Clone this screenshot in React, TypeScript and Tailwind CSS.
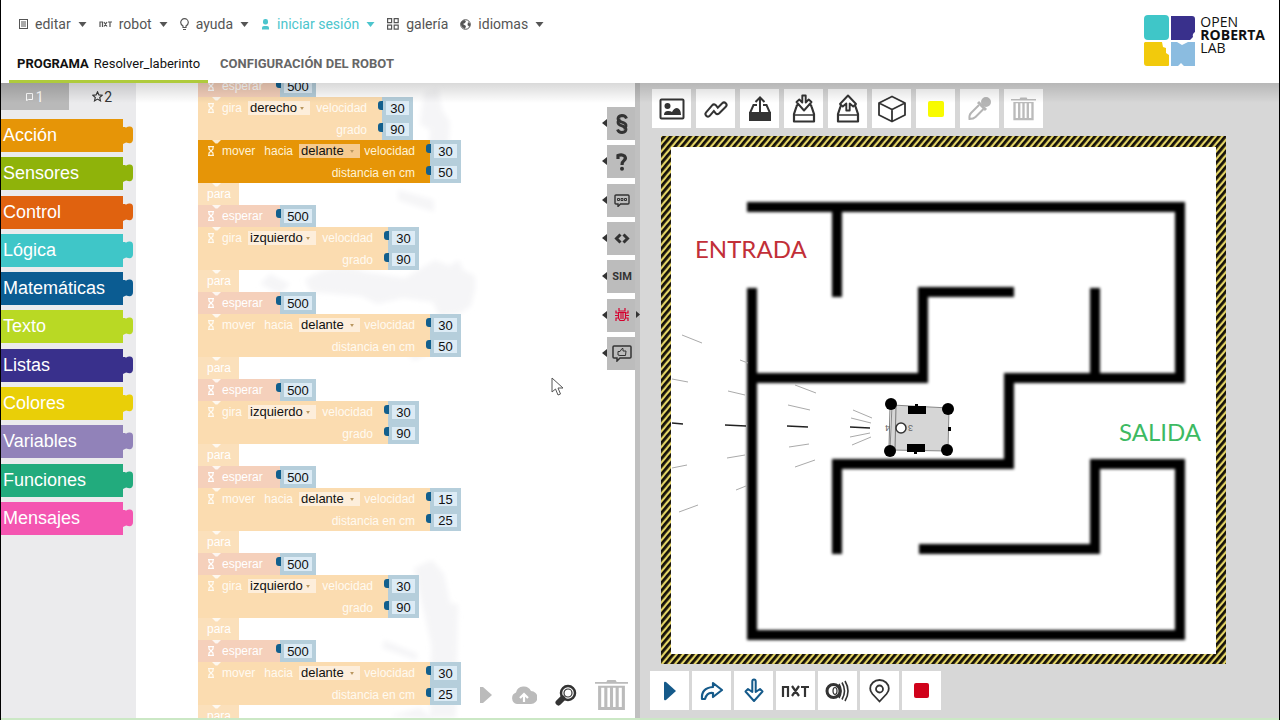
import React, { useId } from "react";

const CATEGORIES = [
  { name: "Acción", bg: "bg-[#e69507]", text: "text-[#e69507]" },
  { name: "Sensores", bg: "bg-[#8fb30a]", text: "text-[#8fb30a]" },
  { name: "Control", bg: "bg-[#e0620f]", text: "text-[#e0620f]" },
  { name: "Lógica", bg: "bg-[#3fc6c8]", text: "text-[#3fc6c8]" },
  { name: "Matemáticas", bg: "bg-[#0b5c92]", text: "text-[#0b5c92]" },
  { name: "Texto", bg: "bg-[#b9d924]", text: "text-[#b9d924]" },
  { name: "Listas", bg: "bg-[#39308c]", text: "text-[#39308c]" },
  { name: "Colores", bg: "bg-[#e9cf08]", text: "text-[#e9cf08]" },
  { name: "Variables", bg: "bg-[#9182b9]", text: "text-[#9182b9]" },
  { name: "Funciones", bg: "bg-[#22ab7d]", text: "text-[#22ab7d]" },
  { name: "Mensajes", bg: "bg-[#f455b1]", text: "text-[#f455b1]" },
];

type Step =
  | { kind: "wait"; ms: number }
  | { kind: "stop" }
  | { kind: "turn"; dir: "derecho" | "izquierdo"; speed: number; degrees: number }
  | { kind: "move"; speed: number; distance: number; active?: boolean };

const PROGRAM: Step[] = [
  { kind: "wait", ms: 500 },
  { kind: "turn", dir: "derecho", speed: 30, degrees: 90 },
  { kind: "move", speed: 30, distance: 50, active: true },
  { kind: "stop" },
  { kind: "wait", ms: 500 },
  { kind: "turn", dir: "izquierdo", speed: 30, degrees: 90 },
  { kind: "stop" },
  { kind: "wait", ms: 500 },
  { kind: "move", speed: 30, distance: 50 },
  { kind: "stop" },
  { kind: "wait", ms: 500 },
  { kind: "turn", dir: "izquierdo", speed: 30, degrees: 90 },
  { kind: "stop" },
  { kind: "wait", ms: 500 },
  { kind: "move", speed: 15, distance: 25 },
  { kind: "stop" },
  { kind: "wait", ms: 500 },
  { kind: "turn", dir: "izquierdo", speed: 30, degrees: 90 },
  { kind: "stop" },
  { kind: "wait", ms: 500 },
  { kind: "move", speed: 30, distance: 25 },
  { kind: "stop" },
];

/* ---------- header ---------- */

const Caret = () => (
  <svg width="9" height="5" viewBox="0 0 9 5" fill="currentColor">
    <path d="M0.5 0h8L4.500 5z" />
  </svg>
);

interface MenuItemProps {
  label: string;
  icon: React.ReactNode;
  caret?: boolean;
  accent?: boolean;
}

const MenuItem: React.FC<MenuItemProps> = ({ label, icon, caret = true, accent }) => (
  <button className={`flex items-center gap-[7px] text-sm leading-5 ${accent ? "text-[#4cc5cd]" : "text-[#555]"}`}>
    {icon}
    <span>{label}</span>
    {caret && <Caret />}
  </button>
);

const Logo = () => (
  <div className="flex gap-1">
    <svg width="52" height="52" viewBox="0 0 52 52">
      <rect x="0" y="0" width="25" height="25" rx="4" fill="#3fc6c8" />
      <path d="M27 1h21a3 3 0 0 1 3 3v13q-3 2-2 5l-3 3H27z" fill="#39308c" />
      <path d="M1 27h17l1 5 3 1v5l3 2v10q0 1-1 1H3q-3 0-3-3V28z" fill="#f2ca0c" />
      <path d="M27 27h6l5 3 6-3h7v24H40l-3-3-3 3h-7z" fill="#8bbce0" />
    </svg>
    <div className="font-['Open_Sans',sans-serif] text-sm leading-[13px] text-[#111]">
      <div>OPEN</div>
      <div className="font-bold">ROBERTA</div>
      <div>LAB</div>
    </div>
  </div>
);

const Header = () => (
  <header className="flex h-[83px] shrink-0 justify-between bg-white">
    <div className="flex flex-col justify-between pt-[14px]">
      <nav className="flex gap-3 pl-[18px]">
        <MenuItem
          label="editar"
          icon={
            <svg width="9" height="11" viewBox="0 0 9 11" fill="none" stroke="currentColor">
              <rect x="0.500" y="0.500" width="8" height="9" />
              <path d="M2 3h5M2 5h5M2 7h5" />
            </svg>
          }
        />
        <MenuItem
          label="robot"
          icon={
            <svg width="13" height="6" viewBox="0 0 13 6" fill="none" stroke="currentColor" strokeWidth="1.2">
              <path d="M1 6V1h2.500v5M5 1l3 4.500M8 1L5 5.500M9 1h4M11 1v5" />
            </svg>
          }
        />
        <MenuItem
          label="ayuda"
          icon={
            <svg width="9" height="13" viewBox="0 0 9 13" fill="none" stroke="currentColor" strokeWidth="1.2">
              <path d="M3 9.500V8C1.500 7 .7 6 .7 4.500a3.800 3.800 0 0 1 7.600 0C8.300 6 7.500 7 6 8v1.500zM3 11.500h3" />
            </svg>
          }
        />
        <MenuItem
          accent
          label="iniciar sesión"
          icon={
            <svg width="9" height="11" viewBox="0 0 9 11" fill="currentColor">
              <rect x="2" y="0" width="5" height="5.500" rx="2.200" />
              <path d="M1 10.500V8.500Q1 7 3 7h3q2 0 2 1.500v2z" />
            </svg>
          }
        />
        <MenuItem
          label="galería"
          caret={false}
          icon={
            <svg width="12" height="12" viewBox="0 0 12 12" fill="none" stroke="currentColor" strokeWidth="1.2">
              <path d="M.6 .6h4v4h-4zM7.200 .6h4v4h-4zM.6 7.200h4v4h-4zM7.200 7.200h4v4h-4z" />
            </svg>
          }
        />
        <MenuItem
          label="idiomas"
          icon={
            <svg width="11" height="11" viewBox="0 0 11 11">
              <circle cx="5.500" cy="5.500" r="4.800" fill="none" stroke="currentColor" />
              <path d="M1 3l3-2 2 1-1 2-2 1 3 2-1 3-3-2-1.500-3zM8 3l2.500 2-1 3-2-2z" fill="currentColor" />
            </svg>
          }
        />
      </nav>
      <div className="flex gap-1 pl-2 text-[13px] leading-5">
        <button className="flex gap-[5px] border-b-[3px] border-[#afcb3c] px-2 pb-[6px] text-[#111]">
          <b>PROGRAMA</b> <span>Resolver_laberinto</span>
        </button>
        <button className="border-b-[3px] border-transparent px-2 pb-[6px] font-bold text-[#666]">
          CONFIGURACIÓN DEL ROBOT
        </button>
      </div>
    </div>
    <div className="pt-[15px] pr-[14px]">
      <Logo />
    </div>
  </header>
);

/* ---------- toolbox ---------- */

const Toolbox = () => (
  <aside className="w-[135px] shrink-0 bg-[#ebebed]">
    <div className="flex text-sm">
      <button className="flex h-[27px] flex-1 items-center justify-center gap-[2px] bg-[#b9b9b9] text-white">
        <svg width="8" height="8" viewBox="0 0 8 8" fill="none" stroke="currentColor">
          <path d="M.5 .5h6v6h-4l-2 1z" />
        </svg>
        1
      </button>
      <button className="flex h-[27px] flex-1 items-center justify-center gap-[1px] text-[#333]">
        <svg width="11" height="11" viewBox="0 0 11 11" fill="none" stroke="currentColor" strokeWidth="1.1">
          <path d="M5.500 .8l1.400 3.100 3.400 .3-2.600 2.300 .8 3.400-3-1.800-3 1.800 .8-3.400L.7 4.200l3.400-.3z" />
        </svg>
        2
      </button>
    </div>
    <ul className="mt-[9px] flex h-[416px] flex-col justify-between font-['Liberation_Sans',sans-serif] text-lg leading-[33px] text-white">
      {CATEGORIES.map((c) => (
        <li key={c.name} className="flex items-center">
          <button className={`h-[33px] w-[122px] pl-[2px] text-left ${c.bg}`}>{c.name}</button>
          <svg className={c.text} width="10" height="19" viewBox="0 0 10 19" fill="currentColor">
            <path d="M0 1h2Q3 2 4 1l2-.5Q10 0 10 4v9q0 5-5 4-2-1-3 0l-2 1z" />
          </svg>
        </li>
      ))}
    </ul>
  </aside>
);

/* ---------- program blocks ---------- */

const Hourglass = () => (
  <svg width="6" height="10" viewBox="0 0 6 10" fill="none" stroke="currentColor" strokeWidth="1.2">
    <path d="M0 .6h6M0 9.400h6M1 1v2l2 2-2 2v2M5 1v2L3 5l2 2v2" />
  </svg>
);

const Notch = () => (
  <svg className="absolute top-0 left-[14px]" width="9" height="4" viewBox="0 0 9 4" fill="#fff" fillOpacity="0.8">
    <path d="M0 0h9L5.500 3.500h-2z" />
  </svg>
);

interface NumberBlockProps {
  id: string;
  value: number;
  wide?: boolean;
}

const NumberBlock: React.FC<NumberBlockProps> = ({ id, value, wide }) => (
  <span className={`relative flex shrink-0 bg-[#b5cedb] p-1 ${wide ? "w-[36px]" : "w-[31px]"}`}>
    <span className="absolute top-[4px] -left-1 h-[9px] w-[5px] rounded-l-[3px] bg-[#125f8d]" />
    <input
      id={id}
      defaultValue={value}
      className="h-full w-full bg-[#dcebf5] text-center text-[13px] text-[#111]"
    />
  </span>
);

const DirectionSelect: React.FC<{ value: string; width: string; bg: string }> = ({ value, width, bg }) => (
  <span className={`relative ${width}`}>
    <select
      aria-label="dirección"
      defaultValue={value}
      className={`block h-[14px] w-full appearance-none pl-[2px] text-[13px] leading-[14px] text-[#111] ${bg}`}
    >
      <option>{value}</option>
    </select>
    <svg className="absolute top-[6px] right-[6px]" width="4" height="3" viewBox="0 0 5 4" fill="#b9975f">
      <path d="M0 0h5L2.500 4z" />
    </svg>
  </span>
);

const Block: React.FC<{ step: Step }> = ({ step }) => {
  const id = useId();

  if (step.kind === "stop") {
    return (
      <li className="relative flex h-[22px] w-[41px] items-center bg-[#fbe0bb] pl-[9px] text-white">
        <Notch />
        para
      </li>
    );
  }

  if (step.kind === "wait") {
    return (
      <li className="relative flex h-[22px]">
        <Notch />
        <label htmlFor={id} className="flex w-[82px] items-center gap-2 bg-[#f5d0bb] pl-[10px] text-white">
          <Hourglass />
          esperar
        </label>
        <NumberBlock id={id} value={step.ms} wide />
      </li>
    );
  }

  const active = step.kind === "move" && step.active;
  const width = step.kind === "move" ? "w-[263px]" : step.dir === "derecho" ? "w-[215px]" : "w-[221px]";
  const color = active ? "bg-[#e69507] text-[#fff3d6]" : "bg-[#fbdcb0] text-[#fffaf0]";

  return (
    <li className={`relative h-[43px] ${width} ${color}`}>
      <Notch />
      <div className="flex h-[22px]">
        <div className="flex flex-1 items-center pr-[15px] pl-[10px]">
          <Hourglass />
          {step.kind === "move" ? (
            <>
              <span className="ml-2">mover</span>
              <span className="mr-[6px] ml-[9px]">hacia</span>
              <DirectionSelect value="delante" width="w-[61px]" bg={active ? "bg-[#f6cb90]" : "bg-[#fdeedb]"} />
            </>
          ) : (
            <>
              <span className="mr-[6px] ml-2">gira</span>
              <DirectionSelect
                value={step.dir}
                width={step.dir === "derecho" ? "w-[62px]" : "w-[68px]"}
                bg="bg-[#fdeedb]"
              />
            </>
          )}
          <label htmlFor={id} className="ml-auto">
            velocidad
          </label>
        </div>
        <NumberBlock id={id} value={step.speed} />
      </div>
      <div className="flex h-[21px]">
        <label htmlFor={`${id}-2`} className="flex flex-1 items-center justify-end pr-[15px]">
          {step.kind === "move" ? "distancia en cm" : "grado"}
        </label>
        <NumberBlock id={`${id}-2`} value={step.kind === "move" ? step.distance : step.degrees} />
      </div>
    </li>
  );
};

const Watermark = () => (
  <svg className="absolute inset-0" width="460" height="637" viewBox="136 83 460 637" fill="#f5f5f7">
    <defs>
      <filter id="haze">
        <feGaussianBlur stdDeviation="2.500" />
      </filter>
    </defs>
    <g filter="url(#haze)">
      <path d="M424 92l14-4 4 22 8 12-2 30-20 8 2-30-10-6z" />
      <path d="M305 280q30-20 60-8l40 6 30-18 14 6 10-6 4 10 12 6v14l-4 16-12 8-20 2-6-14-30-4-26 6-16-8-50-4z" />
      <path d="M260 284l10-10 20 10-10 10zM398 190l36 10v12l-36-12zM400 345l30 8-16 8z" />
      <path d="M414 568l18-8 12 14 6 28 8 10-2 28-24 8zM432 604h26l-2 114h-26z" />
      <path d="M384 640l34 14-2 6-34-12zM390 716l30-8 14 12z" />
    </g>
  </svg>
);

const Trash: React.FC<{ size: number }> = ({ size }) => (
  <svg width={size} height={size} viewBox="0 0 32 34" fill="#bbb" preserveAspectRatio="none">
    <path
      d="M0 4h11l1-2h8l1 2h11v2H0zM3 8h26v25H3zM6 10v20h3V10zM12 10v20h2.500V10zM17.500 10v20H20V10zM23 10v20h3V10z"
      fillRule="evenodd"
    />
  </svg>
);

const Workspace = () => (
  <section className="relative min-w-0 flex-1 overflow-hidden bg-white">
    <Watermark />
    <ul className="relative -mt-2 pl-[62px] font-['Liberation_Sans',sans-serif] text-xs">
      {PROGRAM.map((step, i) => (
        <Block key={i} step={step} />
      ))}
    </ul>
    <svg className="absolute top-[294px] left-[415px]" width="13" height="19" viewBox="0 0 13 19" fill="#fff" stroke="#555">
      <path d="M1 1v14l3.500-3 2.500 6 2.500-1-2.500-6H12z" />
    </svg>
  </section>
);

const WorkspaceTools = () => (
  <div className="absolute right-3 bottom-[9px] flex items-center gap-[18px]">
    <button aria-label="ejecutar">
      <svg width="14" height="18" viewBox="0 0 14 18" fill="#bbb">
        <path d="M1 1h3l9 8-9 8H1z" />
      </svg>
    </button>
    <button aria-label="subir">
      <svg width="26" height="20" viewBox="0 0 26 20">
        <path d="M6 19a6 6 0 0 1-1-11.500A8 8 0 0 1 20 6a6.500 6.500 0 0 1 0 13z" fill="#bbb" />
        <path d="M13 17V10M9 13l4-4 4 4" fill="none" stroke="#fff" strokeWidth="2.200" />
      </svg>
    </button>
    <button aria-label="zoom">
      <svg width="22" height="22" viewBox="0 0 22 22" fill="none" stroke="#333">
        <circle cx="13" cy="9" r="7" strokeWidth="2.500" />
        <circle cx="13" cy="9" r="4" strokeWidth="1.200" />
        <path d="M7.500 14.500L3.500 18.500" strokeWidth="6" strokeLinecap="round" />
      </svg>
    </button>
    <button aria-label="papelera">
      <Trash size={33} />
    </button>
  </div>
);

/* ---------- side rail ---------- */

const RAIL = [
  {
    name: "información legal",
    icon: (
      <svg width="14" height="20" viewBox="0 0 14 20" fill="none" stroke="#333" strokeWidth="2.800">
        <path d="M11.500 4.500Q10.500 1.500 7 1.500 3 2 3 4.800 3.200 7 7 8.200q4.500 1.300 4 4-.5 1.800-2.500 1.800" />
        <path d="M2.500 15.500Q3.500 18.500 7 18.500q4-.5 4-3.300-.2-2.200-4-3.400-4.500-1.300-4-4Q3.500 6 5.500 6" />
      </svg>
    ),
  },
  {
    name: "ayuda",
    icon: (
      <svg width="12" height="18" viewBox="0 0 12 18" fill="none" stroke="#333">
        <path d="M2 6V2.500Q6 1 8.500 3 10.500 5.500 8 7.500 6 9 6 12" strokeWidth="3.200" />
        <circle cx="6" cy="15.800" r="1" strokeWidth="2" />
      </svg>
    ),
  },
  {
    name: "mensajes",
    icon: (
      <svg width="16" height="13" viewBox="0 0 16 13" fill="none" stroke="#333">
        <path d="M2 1h12q1 0 1 1v7q0 1-1 1H6.500L4 12.500V10H2Q1 10 1 9V2q0-1 1-1z" strokeWidth="1.400" />
        <path d="M3.500 4.500h2v2h-2zM7 4.500h2v2H7zM10.500 4.500h2v2h-2z" strokeWidth="1" />
      </svg>
    ),
  },
  {
    name: "código",
    icon: (
      <svg width="16" height="11" viewBox="0 0 16 11" fill="none" stroke="#333" strokeWidth="3">
        <path d="M6.500 1.500l-4 4 4 4M9.500 1.500l4 4-4 4" />
      </svg>
    ),
  },
  { name: "SIM", icon: <span className="text-[11px] font-bold">SIM</span> },
  {
    name: "depurar",
    icon: (
      <svg width="14" height="14" viewBox="0 0 14 14" fill="none" stroke="#d5002f" strokeWidth="1.200">
        <path d="M4 0v3h6V0M3.500 4.500h7v5.500L9 12.500H5L3.500 10zM0 7.500h3.500M10.500 7.500H14M1 2.500v2.500h2.500M13 2.500v2.500h-2.500M1 13v-3h2.500M13 13v-3h-2.500M6 5v6M8 5v6" />
      </svg>
    ),
  },
  {
    name: "opinión",
    icon: (
      <svg width="20" height="17" viewBox="0 0 20 17" fill="none" stroke="#333">
        <path d="M2 1h16q1 0 1 1v10q0 1-1 1H8l-3 3v-3H2q-1 0-1-1V2q0-1 1-1z" strokeWidth="1.500" />
        <path d="M6 6.500h2l2-3h1v2.500h3l-.5 4.500H8L6 10z" />
      </svg>
    ),
  },
];

const Rail = () => (
  <div className="mt-6 flex h-[263px] w-7 shrink-0 flex-col justify-between">
    {RAIL.map((item) => (
      <button
        key={item.name}
        aria-label={item.name}
        className="relative flex h-[33px] items-center justify-center bg-[#bcbcbc] pl-[2px] text-[#333]"
      >
        <svg className="absolute top-3 -left-[5px]" width="5" height="8" viewBox="0 0 5 8" fill="#333">
          <path d="M5 0v8L0 4z" />
        </svg>
        {item.icon}
        {item.name === "depurar" && (
          <svg className="absolute top-3 -right-[5px]" width="4" height="7" viewBox="0 0 4 7" fill="#333">
            <path d="M0 0v7l4-3.500z" />
          </svg>
        )}
      </button>
    ))}
  </div>
);

/* ---------- simulation ---------- */

const SCENE_TOOLS = [
  {
    name: "fondo",
    icon: (
      <svg width="26" height="22" viewBox="0 0 26 22">
        <rect x="1.500" y="1.500" width="23" height="19" rx="1" fill="none" stroke="#333" strokeWidth="2" />
        <circle cx="8.500" cy="8" r="3" fill="#333" />
        <path d="M5 17q0-4 4-4 3 0 4 1 2-4 5-4 4 1 4 7z" fill="#333" />
      </svg>
    ),
  },
  {
    name: "trayectoria",
    icon: (
      <svg width="24" height="20" viewBox="0 0 24 20" fill="none" strokeLinecap="round" strokeLinejoin="round">
        <path d="M4 15l6-7 3.500 4.500L20 6" stroke="#333" strokeWidth="7" />
        <path d="M4 15l6-7 3.500 4.500L20 6" stroke="#fff" strokeWidth="3" />
      </svg>
    ),
  },
  {
    name: "subir",
    icon: (
      <svg width="24" height="27" viewBox="0 0 24 27" fill="none" stroke="#333" strokeWidth="2">
        <path d="M9 10H5.500L2 18M15 10h3.500L22 18" />
        <path d="M2 18h20v7H2z" fill="#333" />
        <path d="M12 17V2.500M7.500 7L12 2.500 16.500 7" />
      </svg>
    ),
  },
  {
    name: "importar",
    icon: (
      <svg width="24" height="29" viewBox="0 0 24 29" fill="none" stroke="#333" strokeWidth="2.200" strokeLinejoin="round">
        <path d="M7 10.500h10q2 0 2.500 2L22 20v7.500H2V20l2.500-7.500q.5-2 2.500-2z" />
        <path d="M2 21h20" strokeWidth="1.500" />
        <path d="M10.300 1.500h3.400v7l3-3 2.800 2.500L12 16.500 4.500 8l2.800-2.500 3 3z" fill="#fff" strokeWidth="1.900" />
      </svg>
    ),
  },
  {
    name: "exportar",
    icon: (
      <svg width="24" height="29" viewBox="0 0 24 29" fill="none" stroke="#333" strokeWidth="2.200" strokeLinejoin="round">
        <path d="M7 10.500h10q2 0 2.500 2L22 20v7.500H2V20l2.500-7.500q.5-2 2.500-2z" />
        <path d="M2 21h20" strokeWidth="1.500" />
        <path d="M12 1.500l8 8.500-2.800 2.500-3.500-3v7h-3.400v-7l-3.500 3L4 10z" fill="#fff" strokeWidth="1.900" />
      </svg>
    ),
  },
  {
    name: "obstáculo",
    icon: (
      <svg width="30" height="28" viewBox="0 0 30 28" fill="none" stroke="#333" strokeWidth="1.800" strokeLinejoin="round">
        <path d="M15 1.500L28 8v12l-13 6.500L2 20V8zM2 8l13 6.500L28 8M15 14.500v12" />
      </svg>
    ),
  },
  { name: "color", icon: <span className="h-4 w-4 rounded-[2px] bg-[#f8fb00]" /> },
  {
    name: "pipeta",
    icon: (
      <svg width="25" height="25" viewBox="0 0 25 25" fill="none" stroke="#b5b5b5">
        <circle cx="19" cy="6" r="3" strokeWidth="4" fill="#b5b5b5" />
        <path d="M11 6l8 8" strokeWidth="3" />
        <path d="M12 9l-8 8q-2 2-1.500 6 4 0 6-2l8-8" strokeWidth="2" />
      </svg>
    ),
  },
  { name: "borrar", icon: <Trash size={25} /> },
];

const RUN_TOOLS = [
  {
    name: "iniciar",
    icon: (
      <svg width="14" height="20" viewBox="0 0 14 20" fill="#155a8a">
        <path d="M1 2q0-2 2-1l10 9-10 9q-2 1-2-1z" />
      </svg>
    ),
  },
  {
    name: "paso",
    icon: (
      <svg width="24" height="20" viewBox="0 0 24 20" fill="none" stroke="#155a8a" strokeWidth="2.200" strokeLinejoin="round">
        <path d="M13 2l9 7-9 7v-4Q7 11 5 18H2Q1 7 13 6z" />
      </svg>
    ),
  },
  {
    name: "entrar",
    icon: (
      <svg width="20" height="25" viewBox="0 0 20 25" fill="none" stroke="#155a8a" strokeWidth="2" strokeLinejoin="round">
        <path d="M8.300 3.500q0-2 1.700-2t1.700 2V14l4.300-3 2.500 2.500L10 23l-8.500-9.500L4 11l4.300 3z" />
      </svg>
    ),
  },
  {
    name: "nxt",
    icon: (
      <svg width="29" height="12" viewBox="0 0 29 12" fill="none" stroke="#333" strokeWidth="2.200">
        <path d="M2 12V2h5v10M11 1l7 10M18 1l-7 10M20 2h8M24 2v10" />
      </svg>
    ),
  },
  {
    name: "sensores",
    icon: (
      <svg width="25" height="22" viewBox="0 0 25 22" fill="none" stroke="#333">
        <circle cx="8.500" cy="11" r="6.500" strokeWidth="3" />
        <ellipse cx="10" cy="11" rx="2" ry="3.500" strokeWidth="1.200" />
        <path d="M14 4q4 7 0 14M17 2.500q5 8.500 0 17M20 1q6 10 0 20" strokeWidth="1.600" />
      </svg>
    ),
  },
  {
    name: "posición",
    icon: (
      <svg width="21" height="24" viewBox="0 0 21 24" fill="none" stroke="#333" strokeWidth="1.800">
        <path d="M10.500 22.500L3.500 15Q1 12 1.200 9.500a9.300 8.500 0 0 1 18.600 0Q20 12 17.500 15z" />
        <circle cx="10.500" cy="10" r="3.500" />
      </svg>
    ),
  },
  { name: "detener", icon: <span className="h-[15px] w-[15px] rounded-[2px] bg-[#d0021b]" /> },
];

const SONAR_FAINT =
  "M682 335l20 8M672 379l16 3M740 360l8 3M728 391l17 4M795 385l21 8M788 405l22 5M853 410l19 8M851 418l20 5M850 437l20-4M852 445l19-8M789 447l20-3M795 467l20-7M727 458l18-3M736 490l10-4M672 468l15-3M679 512l19-7";

const Robot = () => (
  <g>
    <path d="M892 405l57 3-1 43-58-1z" fill="#d6d6d6" stroke="#888" />
    <path d="M896 406l-1 44M890 408l-1 40" stroke="#777" />
    <g fill="#000">
      <circle cx="891" cy="404" r="6" />
      <circle cx="948" cy="409" r="6" />
      <circle cx="890" cy="451" r="6" />
      <circle cx="947" cy="450" r="6" />
      <path d="M908 406h18v8h-18zM907 444h18v8h-18zM915 404h3v3h-3zM914 451h3v3h-3zM948 427h3v4h-3z" />
    </g>
    <circle cx="901" cy="428" r="5" fill="#fff" stroke="#333" strokeWidth="1.500" />
    <g className="font-['Liberation_Sans',sans-serif]" fontSize="9" fill="#666">
      <text transform="rotate(180 888 428)" x="886" y="431">
        4
      </text>
      <text transform="rotate(180 911 428)" x="909" y="431">
        3
      </text>
    </g>
  </g>
);

const Arena = () => (
  <svg className="mt-2 block h-auto w-full" viewBox="661 136 565 528">
    <defs>
      <pattern id="hazard" width="5" height="5" patternUnits="userSpaceOnUse" patternTransform="rotate(40)">
        <rect width="5" height="5" fill="#e3d465" />
        <rect width="2.800" height="5" fill="#14100a" />
      </pattern>
      <filter id="soft">
        <feGaussianBlur stdDeviation="1.500" />
      </filter>
    </defs>
    <rect x="661" y="136" width="565" height="528" fill="url(#hazard)" />
    <rect x="671" y="147" width="545" height="507" fill="#fff" />
    <g fill="none" stroke="#000" strokeWidth="10" filter="url(#soft)">
      <path d="M747 207H1180V378H1009V464H837V554" />
      <path d="M837 207V297M1095 288V378M1014 292H923V378H752" />
      <path d="M752 288V635H1180V464H1095V549H919" />
    </g>
    <path d={SONAR_FAINT} stroke="#aaa" fill="none" />
    <path d="M672 423l11 1M725 425l21 1M787 426l21 1M850 427l20 1" stroke="#222" strokeWidth="1.500" fill="none" />
    <Robot />
    <g className="font-['Lato',sans-serif]" fontSize="24">
      <text x="695" y="258" fill="#c22f38">
        ENTRADA
      </text>
      <text x="1119" y="441" fill="#3dba62">
        SALIDA
      </text>
    </g>
  </svg>
);

interface ToolbarProps {
  tools: { name: string; icon: React.ReactNode }[];
  className: string;
}

const Toolbar: React.FC<ToolbarProps> = ({ tools, className }) => (
  <div className={`flex ${className}`}>
    {tools.map((tool) => (
      <button
        key={tool.name}
        aria-label={tool.name}
        className="flex h-[39px] w-[39px] items-center justify-center bg-white"
      >
        {tool.icon}
      </button>
    ))}
  </div>
);

const Simulation = () => (
  <section className="min-w-0 flex-1 bg-[#d7d7d7] pt-[6px]">
    <Toolbar tools={SCENE_TOOLS} className="gap-[5px] pl-3" />
    <div className="pr-[53px] pl-[21px]">
      <Arena />
    </div>
    <Toolbar tools={RUN_TOOLS} className="mt-[7px] gap-[3px] pl-[10px]" />
  </section>
);

const App = () => {
  return (
    <div className="flex h-screen flex-col border-x border-black bg-white font-['Roboto',sans-serif]">
      <Header />
      <main className="relative flex min-h-0 flex-1 overflow-hidden">
        <div className="relative flex min-w-0 flex-1">
          <Toolbox />
          <Workspace />
          <Rail />
          <div className="w-[5px] shrink-0 bg-[#c0c0c0]" />
          <WorkspaceTools />
        </div>
        <Simulation />
        <div className="pointer-events-none absolute inset-x-0 top-0 h-5 bg-linear-to-b from-black/15 to-transparent" />
        <div className="absolute inset-x-0 bottom-0 h-[2px] bg-[#cbe8c5]" />
      </main>
    </div>
  );
};

export default App;
